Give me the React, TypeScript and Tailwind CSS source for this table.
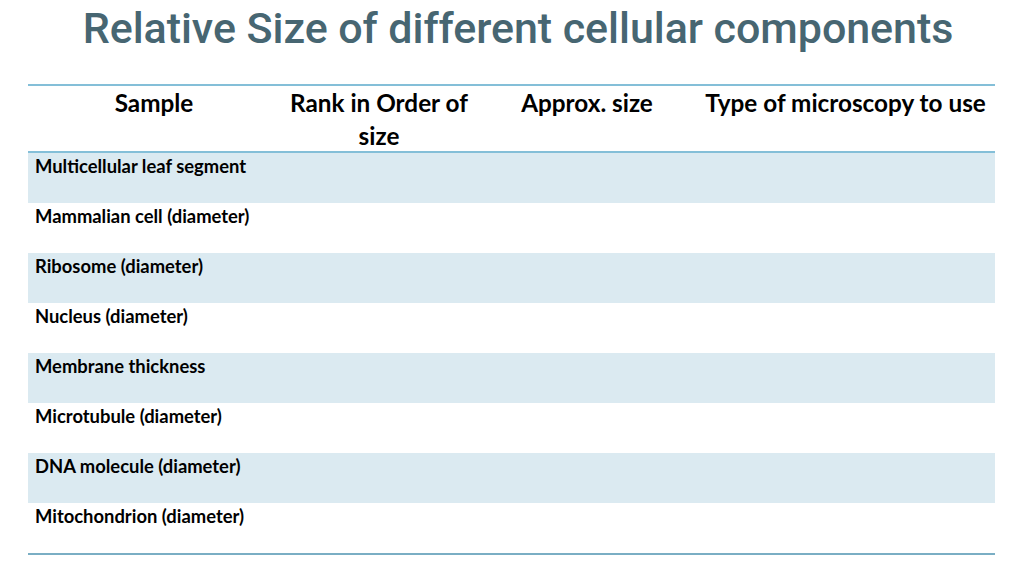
const rows = [
  'Multicellular leaf segment',
  'Mammalian cell (diameter)',
  'Ribosome (diameter)',
  'Nucleus (diameter)',
  'Membrane thickness',
  'Microtubule (diameter)',
  'DNA molecule (diameter)',
  'Mitochondrion (diameter)',
];

const cols = 'grid grid-cols-[252px_198px_218px_299px]';

export default function App() {
  return (
    <div className="w-[1024px] h-[563px] bg-white overflow-hidden font-['Lato',sans-serif]">
      <h1 className="pt-[1px] pl-[12px] h-[84px] text-center text-[43px] leading-[54px] text-[#476672] font-['Roboto',sans-serif] font-medium tracking-[-0.05px]">
        Relative Size of different cellular components
      </h1>
      <div className="ml-[28px] w-[967px]">
        <div className="h-[2px] bg-[#84bfd8]" />
        <div className={`${cols} h-[65px] text-[24.3px] leading-[33px] font-bold text-black`}>
          <div className="text-center">Sample</div>
          <div className="text-center">Rank in Order of<br />size</div>
          <div className="text-center">Approx. size</div>
          <div className="text-center">Type of microscopy to use</div>
        </div>
        <div className="h-[2px] bg-[#84bfd8]" />
        {rows.map((r, i) => (
          <div
            key={i}
            className={`${cols} h-[50px] ${i % 2 === 0 ? 'bg-[#dbeaf1]' : 'bg-white'}`}
          >
            <div className="px-[7px] pt-[1px] text-[18.4px] leading-[24px] font-bold text-black whitespace-nowrap">
              {r}
            </div>
            <div />
            <div />
            <div />
          </div>
        ))}
        <div className="h-[2px] bg-[#7aaec4]" />
      </div>
    </div>
  );
}
